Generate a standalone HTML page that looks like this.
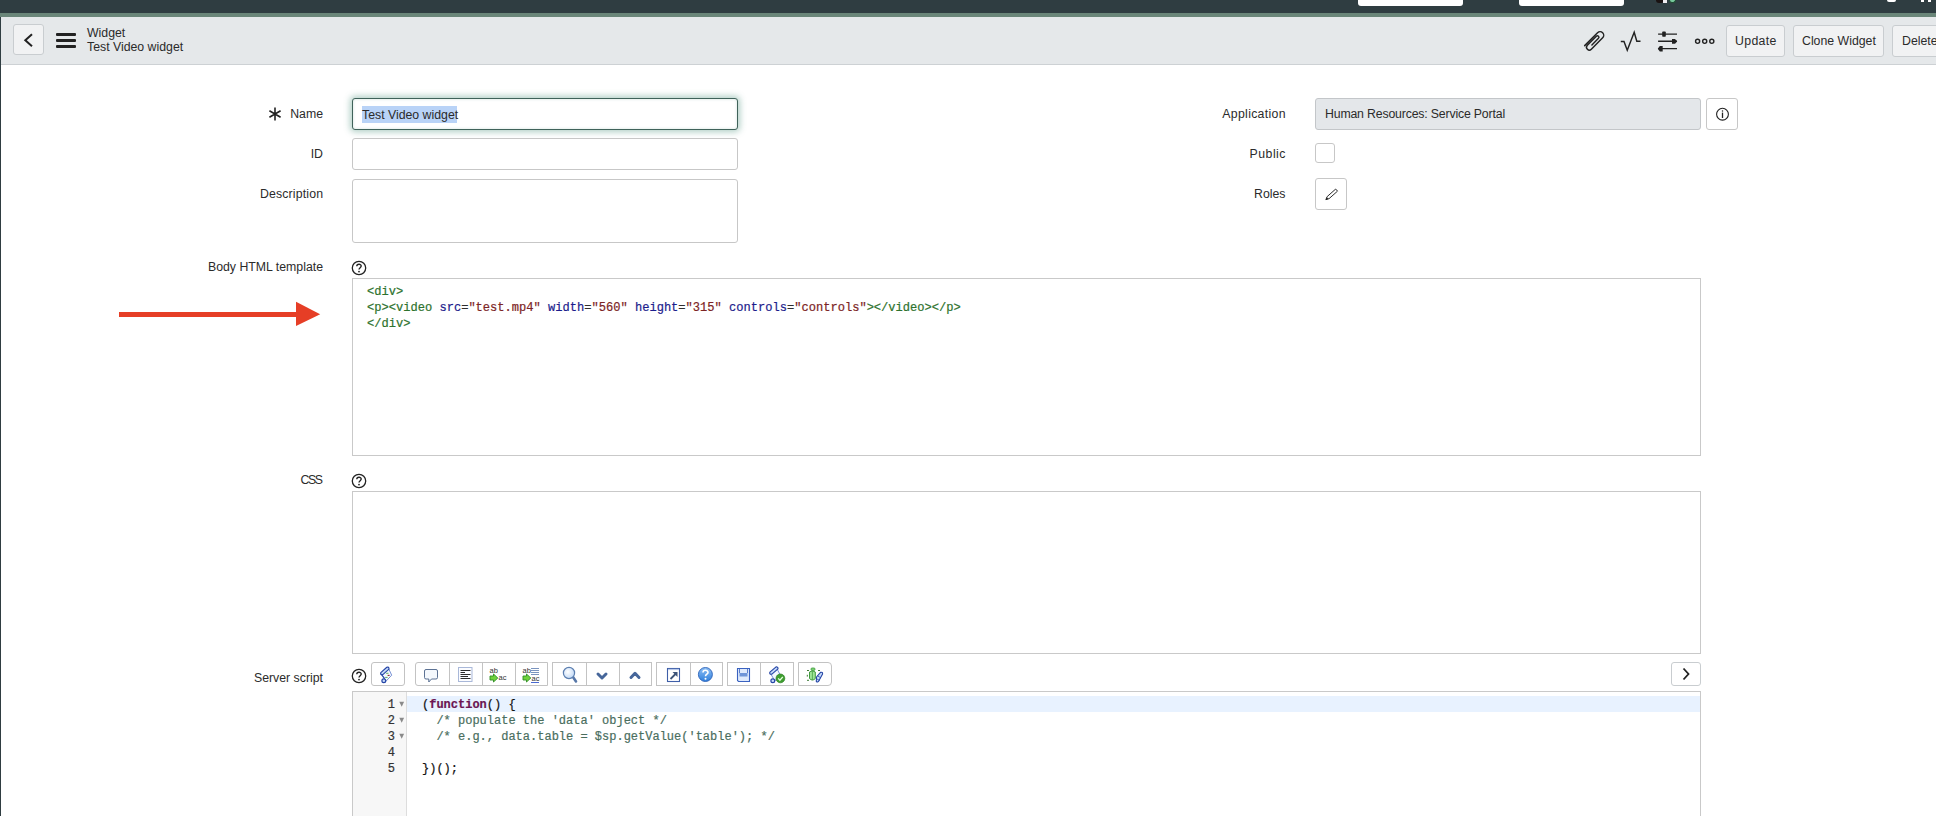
<!DOCTYPE html>
<html><head><meta charset="utf-8">
<style>
*{box-sizing:border-box;margin:0;padding:0}
html,body{width:1936px;height:816px;overflow:hidden;background:#fff;font-family:"Liberation Sans",sans-serif;color:#2e2e2e}
.a{position:absolute}
.t{position:absolute;font-size:12.3px;line-height:12.3px;white-space:nowrap;color:#2b2b2b}
.r{text-align:right}
#topbar{left:0;top:0;width:1936px;height:13px;background:#2f3d41}
#strip{left:0;top:13px;width:1936px;height:4px;background:#6a8679}
#hdr{left:0;top:17px;width:1936px;height:47px;background:#e5e8ea}
#hdrb{left:0;top:64px;width:1936px;height:1px;background:#cdd1d4}
#lline{left:0;top:17px;width:1px;height:799px;background:#2f3d41}
.btn{position:absolute;background:#f1f2f3;border:1px solid #c9cdd0;border-radius:3px}
.inp{position:absolute;background:#fff;border:1px solid #c7c7c7;border-radius:3px}
.mono{position:absolute;font-family:"Liberation Mono",monospace;font-size:12px;line-height:16px;white-space:pre;-webkit-text-stroke:0.2px currentColor}
.tg{color:#2d722d}.at{color:#1c1c8c}.st{color:#7c2424}.kw{color:#6b1552;font-weight:bold}.cm{color:#4a6e5e}
.tbg{position:absolute;top:662px;height:24px;border:1px solid #c3c3c3;background:#fff}
.tbg i{position:absolute;top:0;width:1px;height:22px;background:#c3c3c3}
</style></head><body>
<div class="a" id="topbar"></div>
<div class="a" id="strip"></div>
<!-- top bar pieces -->
<div class="a" style="left:1358px;top:0;width:105px;height:6px;background:#fff;border-radius:0 0 3px 3px"></div>
<div class="a" style="left:1519px;top:0;width:105px;height:6px;background:#fff;border-radius:0 0 3px 3px"></div>
<div class="a" style="left:1656px;top:0;width:8px;height:2.5px;background:#1a1212;border-radius:0 0 3px 3px"></div><div class="a" style="left:1663px;top:0;width:4px;height:2.5px;background:#f0ecf0"></div>
<div class="a" style="left:1668.5px;top:0;width:7px;height:3px;background:#78c89c;border:0.7px solid #1f4a32;border-top:none;border-radius:0 0 3.5px 3.5px"></div>
<div class="a" style="left:1887px;top:0;width:9px;height:2px;background:#fff;border-radius:0 0 4px 4px"></div>
<div class="a" style="left:1921px;top:0;width:3px;height:2px;background:#fff"></div>
<div class="a" style="left:1928px;top:0;width:3px;height:2px;background:#fff"></div>

<div class="a" id="hdr"></div>
<div class="a" id="hdrb"></div>
<div class="a" id="lline"></div>

<!-- header left -->
<div class="btn" style="left:13px;top:24px;width:31px;height:31px"></div>
<svg class="a" style="left:13px;top:24px" width="31" height="31"><path d="M19 10.2 L12.3 16.2 L19 22.2" fill="none" stroke="#222" stroke-width="2"/></svg>
<div class="a" style="left:56px;top:33px;width:20px;height:3px;background:#222;border-radius:1px"></div>
<div class="a" style="left:56px;top:39px;width:20px;height:3px;background:#222;border-radius:1px"></div>
<div class="a" style="left:56px;top:45px;width:20px;height:3px;background:#222;border-radius:1px"></div>
<div class="t" style="left:87px;top:26.6px">Widget</div>
<div class="t" style="left:87px;top:41.2px">Test Video widget</div>

<!-- header right icons -->
<svg class="a" style="left:1560px;top:20px" width="180" height="44" viewBox="1560 20 180 44">
  <path transform="translate(1600.1 35.3) rotate(45)" d="M-3.6 18.2 V0 A3.6 3.6 0 0 1 3.6 0 V16 A2.8 2.8 0 0 1 -2 16 V3.3 A1.5 1.5 0 0 1 1 3.3 V12.6" fill="none" stroke="#222" stroke-width="1.45" stroke-linecap="round"/>
  <path d="M1620.8 41.5 H1624 L1627.25 50.2 L1634.2 32.3 L1636.8 41.3 H1640.5" fill="none" stroke="#222" stroke-width="1.45" stroke-linejoin="miter"/>
  <path d="M1658.1 34.1 H1677 M1658.1 41.3 H1677 M1658.1 48.6 H1677" stroke="#222" stroke-width="1.4"/>
  <rect x="1662.2" y="31.6" width="3.6" height="5.1" rx="0.8" fill="#222"/>
  <path d="M1672 39.1 H1675 L1677.2 41.4 L1675 43.7 H1672 Z" fill="#222"/>
  <path d="M1662.7 46 H1659.8 L1657.8 48.7 L1659.8 51.4 H1662.7 Z" fill="#222"/>
  <circle cx="1697.6" cy="41.3" r="2.05" fill="none" stroke="#222" stroke-width="1.4"/>
  <circle cx="1704.7" cy="41.3" r="2.05" fill="none" stroke="#222" stroke-width="1.4"/>
  <circle cx="1711.8" cy="41.3" r="2.05" fill="none" stroke="#222" stroke-width="1.4"/>
</svg>
<div class="btn" style="left:1726px;top:25px;width:59px;height:32px"></div>
<div class="t" style="left:1735px;top:34.6px;letter-spacing:0.35px">Update</div>
<div class="btn" style="left:1793px;top:25px;width:91px;height:32px"></div>
<div class="t" style="left:1802px;top:34.6px">Clone Widget</div>
<div class="btn" style="left:1892px;top:25px;width:60px;height:32px"></div>
<div class="t" style="left:1902px;top:34.6px">Delete</div>

<!-- left form column -->
<svg class="a" style="left:268px;top:107px" width="14" height="14" viewBox="0 0 14 14">
  <path d="M7 0.5 V13.5 M1.4 3.8 L12.6 10.2 M1.4 10.2 L12.6 3.8" stroke="#222" stroke-width="1.6"/>
</svg>
<div class="t r" style="left:223px;width:100px;top:107.8px">Name</div>
<div class="t r" style="left:223px;width:100px;top:147.6px">ID</div>
<div class="t r" style="left:223px;width:100.15px;top:188.2px;letter-spacing:0.15px">Description</div>
<div class="inp" style="left:352px;top:98px;width:386px;height:32px;border:1.6px solid #3f625a;box-shadow:0 0 6px 2px rgba(70,140,120,0.42),inset 0 0 3px rgba(70,140,120,0.25)"></div>
<div class="a" style="left:362px;top:106px;width:95px;height:17px;background:#b9d3f7"></div>
<div class="t" style="left:362px;top:108.5px">Test Video widget</div>
<div class="inp" style="left:352px;top:138px;width:386px;height:32px"></div>
<div class="inp" style="left:352px;top:179px;width:386px;height:64px"></div>

<!-- right form column -->
<div class="t r" style="left:1185.5px;width:100.3px;top:108px;letter-spacing:0.3px">Application</div>
<div class="t r" style="left:1185.5px;width:100.5px;top:147.8px;letter-spacing:0.5px">Public</div>
<div class="t r" style="left:1185.5px;width:100px;top:188px">Roles</div>
<div class="inp" style="left:1315px;top:98px;width:386px;height:32px;background:#e4e7ea;border-color:#c3c6c9"></div>
<div class="t" style="left:1325px;top:108.3px;letter-spacing:-0.17px">Human Resources: Service Portal</div>
<div class="inp" style="left:1706px;top:98px;width:32px;height:32px"></div>
<svg class="a" style="left:1706px;top:98px" width="32" height="32" viewBox="0 0 32 32">
  <circle cx="16.5" cy="16.2" r="5.9" fill="none" stroke="#222" stroke-width="1.1"/>
  <path d="M16.5 14.6 V20" stroke="#222" stroke-width="1.3"/><circle cx="16.5" cy="13.1" r="0.75" fill="#222"/>
</svg>
<div class="inp" style="left:1315px;top:143px;width:20px;height:20px"></div>
<div class="inp" style="left:1315px;top:178px;width:32px;height:32px"></div>
<svg class="a" style="left:1315px;top:178px" width="32" height="32" viewBox="0 0 32 32">
  <path d="M10.9 21.6 L12.21 18.55 L20.67 11.05 L22.53 13.15 L14.07 20.65 Z" fill="none" stroke="#222" stroke-width="0.95" stroke-linejoin="round"/><path d="M10.6 21.9 L11.7 19.2 L13.4 20.9 Z" fill="#222"/>
</svg>

<!-- Body HTML template -->
<div class="t r" style="left:123px;width:200px;top:260.6px">Body HTML template</div>
<svg class="a help" style="left:351px;top:260px" width="16" height="16" viewBox="0 0 16 16">
  <circle cx="8" cy="8" r="6.7" fill="none" stroke="#222" stroke-width="1.3"/>
  <path d="M5.8 6.2 C5.8 3.7 10.2 3.7 10.2 6.1 C10.2 7.7 8 7.8 8 9.6" fill="none" stroke="#222" stroke-width="1.4"/><circle cx="8" cy="11.6" r="0.9" fill="#222"/>
</svg>
<div class="a" style="left:352px;top:278px;width:1349px;height:178px;border:1px solid #c9c9c9;background:#fff"></div>
<div class="mono" style="left:367px;top:284px;font-size:12.07px"><span class="tg">&lt;div&gt;</span>
<span class="tg">&lt;p&gt;&lt;video</span> <span class="at">src</span>=<span class="st">"test.mp4"</span> <span class="at">width</span>=<span class="st">"560"</span> <span class="at">height</span>=<span class="st">"315"</span> <span class="at">controls</span>=<span class="st">"controls"</span><span class="tg">&gt;&lt;/video&gt;&lt;/p&gt;</span>
<span class="tg">&lt;/div&gt;</span></div>

<!-- arrow -->
<div class="a" style="left:119px;top:312px;width:180px;height:5px;background:#e63e26"></div>
<svg class="a" style="left:295px;top:301px" width="26" height="26" viewBox="0 0 26 26"><path d="M1 0.7 L25.2 13.3 L1 25" fill="#e63e26"/></svg>

<!-- CSS -->
<div class="t r" style="left:223px;width:98.6px;top:473.5px;letter-spacing:-1.4px">CSS</div>
<svg class="a help" style="left:351px;top:473px" width="16" height="16" viewBox="0 0 16 16">
  <circle cx="8" cy="8" r="6.7" fill="none" stroke="#222" stroke-width="1.3"/>
  <path d="M5.8 6.2 C5.8 3.7 10.2 3.7 10.2 6.1 C10.2 7.7 8 7.8 8 9.6" fill="none" stroke="#222" stroke-width="1.4"/><circle cx="8" cy="11.6" r="0.9" fill="#222"/>
</svg>
<div class="a" style="left:352px;top:491px;width:1349px;height:163px;border:1px solid #c9c9c9;background:#fff"></div>

<!-- Server script -->
<div class="t r" style="left:223px;width:100px;top:671.6px">Server script</div>
<svg class="a help" style="left:351px;top:668px" width="16" height="16" viewBox="0 0 16 16">
  <circle cx="8" cy="8" r="6.7" fill="none" stroke="#222" stroke-width="1.3"/>
  <path d="M5.8 6.2 C5.8 3.7 10.2 3.7 10.2 6.1 C10.2 7.7 8 7.8 8 9.6" fill="none" stroke="#222" stroke-width="1.4"/><circle cx="8" cy="11.6" r="0.9" fill="#222"/>
</svg>
<div class="tbg" style="left:371px;width:34px;border-radius:3px"></div>
<div class="tbg" style="left:415px;width:133px;border-radius:3px 0 0 3px"><i style="left:33px"></i><i style="left:66px"></i><i style="left:99px"></i></div>
<div class="tbg" style="left:552px;width:100px"><i style="left:33px"></i><i style="left:66px"></i></div>
<div class="tbg" style="left:656px;width:67px"><i style="left:33px"></i></div>
<div class="tbg" style="left:727px;width:67px"><i style="left:32px"></i></div>
<div class="tbg" style="left:798px;width:34px;border-radius:0 4px 4px 0"></div>
<svg class="a" style="left:360px;top:655px" width="480" height="35" viewBox="360 655 480 35">
 <defs>
  <linearGradient id="gb" x1="0" y1="0" x2="0" y2="1"><stop offset="0" stop-color="#8fc0f5"/><stop offset="1" stop-color="#2f7fdc"/></linearGradient>
  <radialGradient id="gm" cx="0.4" cy="0.4" r="0.6"><stop offset="0" stop-color="#fff"/><stop offset="1" stop-color="#c4dbf7"/></radialGradient>
 </defs>
 <!-- 1 script -->
 <path d="M381.5 674 L388.8 669 L391.7 675.2 L385.7 681.5 L384.4 678.4 Z" fill="#f3f8ff" stroke="#6b86cf" stroke-width="0.9" stroke-linejoin="round"/>
 <path d="M380.8 672.6 L386.8 667.3 Q388.3 666.6 388.9 668 L389 669.1 L382.8 674.6 Q381 675.2 380.6 673.6 Z" fill="#c6dafa" stroke="#2646a6" stroke-width="1.15" stroke-linejoin="round"/>
 <path d="M381 674 L384.6 678.6" stroke="#2646a6" stroke-width="1.1"/>
 <circle cx="383.8" cy="680.8" r="1.9" fill="#c6dafa" stroke="#2646a6" stroke-width="1.2"/>
 <path d="M386.2 673.3 h2.3 M385.2 677.4 h2.4" stroke="#5fae5f" stroke-width="1"/><path d="M387.6 675.4 h2" stroke="#8a2a2a" stroke-width="1.1"/>
 <!-- 2 comment -->
 <path d="M426 669.5 H436 Q437.5 669.5 437.5 671 V677.5 Q437.5 679 436 679 H431.5 L428.8 682 L428.8 679 H426 Q424.5 679 424.5 677.5 V671 Q424.5 669.5 426 669.5 Z" fill="#f4f8fd" stroke="#4a6288" stroke-width="0.9"/>
 <!-- 3 align -->
 <rect x="458.5" y="667.5" width="13.5" height="14" fill="#fbfcff" stroke="#a9b8d9" stroke-width="1"/>
 <path d="M460.5 670.5 H470.5 M460.5 672.5 H465 M460.5 674.5 H470.5 M460.5 676.5 H468 M460.5 678.5 H470.5" stroke="#2c2c2c" stroke-width="1"/>
 <!-- 4 replace -->
 <text x="489.5" y="672.8" font-family="Liberation Sans" font-size="7.5" fill="#333">ab</text>
 <path d="M490 676 H493.5 V674 L497.8 678 L493.5 682 V680 H490 Z" fill="#6fd23c" stroke="#2f8f22" stroke-width="0.9"/>
 <text x="498.5" y="680" font-family="Liberation Sans" font-size="7.5" fill="#333">ac</text>
 <!-- 5 replace all -->
 <text x="522.5" y="672.8" font-family="Liberation Sans" font-size="7.5" fill="#333">ab</text>
 <path d="M531 668.5 H539 M531 670.5 H539 M531 672.5 H539 M531 674.5 H539" stroke="#6b88b8" stroke-width="0.9"/>
 <path d="M523 676 H526.5 V674 L530.8 678 L526.5 682 V680 H523 Z" fill="#6fd23c" stroke="#2f8f22" stroke-width="0.9"/>
 <text x="531.5" y="680.5" font-family="Liberation Sans" font-size="7.5" fill="#333">ac</text>
 <path d="M531 682.5 H539" stroke="#4a6ad0" stroke-width="1"/>
 <!-- 6 magnifier -->
 <path d="M573 677 L576 681.5" stroke="#5777a8" stroke-width="2.6" stroke-linecap="round"/>
 <circle cx="569" cy="673" r="5.6" fill="url(#gm)" stroke="#5c7fb0" stroke-width="1.2"/>
 <!-- 7,8 chevrons -->
 <path d="M598 674 L602 678 L606 674" fill="none" stroke="#46669a" stroke-width="3" stroke-linecap="round" stroke-linejoin="round"/>
 <path d="M631 677.5 L635 673.3 L639 677.5" fill="none" stroke="#46669a" stroke-width="3" stroke-linecap="round" stroke-linejoin="round"/>
 <!-- 9 external -->
 <rect x="667.5" y="668.5" width="12" height="13" fill="#fff" stroke="#3f5fa8" stroke-width="1.1"/>
 <path d="M668 669.5 H679" stroke="#b9c9ea" stroke-width="1.2"/>
 <path d="M670.5 679 L676 673.5" stroke="#3d5478" stroke-width="1.8"/><path d="M672.5 672 H677.5 V677 Z" fill="#3d5478"/>
 <!-- 10 blue help -->
 <circle cx="705.4" cy="674.5" r="7" fill="url(#gb)" stroke="#2d62b8" stroke-width="0.9"/>
 <path d="M703 672.5 C703 669.6 708 669.6 708 672.4 C708 674.2 705.5 674.3 705.5 676.3" fill="none" stroke="#fff" stroke-width="1.6"/><circle cx="705.5" cy="678.8" r="1" fill="#fff"/>
 <!-- 11 floppy -->
 <path d="M737.5 668.5 H749.5 V681.5 H738.5 L737.5 680.5 Z" fill="#dfeafc" stroke="#3a62c0" stroke-width="1.1"/>
 <rect x="739.5" y="673" width="8" height="3.5" fill="#6f95d8"/>
 <path d="M739.5 668.8 V673 M747.5 668.8 V673" stroke="#3a62c0" stroke-width="0.8"/>
 <!-- 12 scroll check -->
 <path d="M770.5 673.5 L777 668.8 L780 674.5 L774.5 681.5 L773.4 678.4 Z" fill="#f3f8ff" stroke="#6b86cf" stroke-width="0.9" stroke-linejoin="round"/>
 <path d="M769.9 672.1 L775.8 667.1 Q777.3 666.4 777.9 667.8 L778 668.9 L771.9 674.1 Q770.1 674.7 769.7 673.1 Z" fill="#c6dafa" stroke="#2646a6" stroke-width="1.15" stroke-linejoin="round"/>
 <circle cx="772.8" cy="680.8" r="1.9" fill="#c6dafa" stroke="#2646a6" stroke-width="1.2"/>
 <circle cx="780.4" cy="678.4" r="4.4" fill="#3f9f30" stroke="#2c7d22" stroke-width="0.7"/>
 <path d="M778.2 678.4 L779.9 680.2 L782.8 676.8" fill="none" stroke="#e8ffe0" stroke-width="1.3"/>
 <!-- 13 bug -->
 <path d="M807 670.5 h2 M818 670.5 h2 M807.3 674.8 v1.8 M807 680.3 h2" stroke="#3d7a36" stroke-width="1"/>
 <path d="M809.5 672 Q812.4 669.5 815.3 672 V678.5 Q812.4 681.6 809.5 678.5 Z" fill="#9fe697" stroke="#3f9a3c" stroke-width="1"/>
 <rect x="811" y="668" width="4" height="2.4" rx="1" fill="#7fd477" stroke="#3f9a3c" stroke-width="0.8"/>
 <path d="M812.4 671 V680" stroke="#4aa046" stroke-width="0.8"/>
 <path d="M816.5 677 L820.5 672.4 Q822.8 671.8 822.6 674 L819 680.6 Q817.6 683 816.3 681.4 Z" fill="#c6dafa" stroke="#2646a6" stroke-width="1.1" stroke-linejoin="round"/>
 <path d="M817.5 675.8 L821 678 M817 679 L819.6 680.5" stroke="#2646a6" stroke-width="0.8"/>
</svg>

<div class="btn" style="left:1671px;top:662px;width:30px;height:24px;background:#fff"></div>
<svg class="a" style="left:1671px;top:662px" width="30" height="24" viewBox="0 0 30 24"><path d="M12.5 6.5 L17.5 12 L12.5 17.5" fill="none" stroke="#222" stroke-width="1.8"/></svg>

<div class="a" style="left:352px;top:691px;width:1349px;height:140px;border:1px solid #c9c9c9;background:#fff"></div>
<div class="a" style="left:353px;top:692px;width:54px;height:130px;background:#f7f7f7;border-right:1px solid #ddd"></div>
<div class="a" style="left:407px;top:696px;width:1293px;height:16px;background:#e8f2ff"></div>
<div class="mono" style="left:360px;top:696.8px;width:35px;text-align:right;color:#333">1
2
3
4
5</div>
<svg class="a" style="left:398px;top:700px" width="8" height="40" viewBox="0 0 8 40"><path d="M1.3 1.7 H6.1 L3.7 6.8 Z M1.3 17.7 H6.1 L3.7 22.8 Z M1.3 33.7 H6.1 L3.7 38.8 Z" fill="#8a8a8a"/></svg>
<div class="mono" style="left:422px;top:696.8px;color:#111">(<span class="kw">function</span>() {
  <span class="cm">/* populate the 'data' object */</span>
  <span class="cm">/* e.g., data.table = $sp.getValue('table'); */</span>

})();</div>
</body></html>
